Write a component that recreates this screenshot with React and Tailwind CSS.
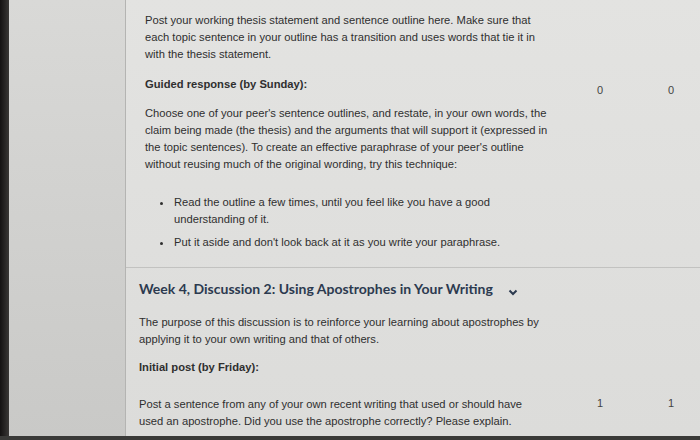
import React from 'react'

function Counts({ a, b, className }) {
    return (
        <div className={`flex shrink-0 text-[11px] text-[#444] ${className}`}>
            <div className="w-[84px] text-center">{a}</div>
            <div className="w-[58px] text-center">{b}</div>
        </div>
    )
}

export default function App() {
    return (
        <div className="w-[700px] h-[440px] flex flex-col overflow-hidden bg-[#2a2a2a] font-['Liberation_Sans',Arial,sans-serif]">
            <div className="flex flex-1 min-h-0">
                <div className="w-[9px] shrink-0 bg-gradient-to-r from-[#141212] to-[#3a3836]"></div>
                <div className="w-[117px] shrink-0 bg-gradient-to-b from-[#d9d9d7] to-[#c9c9c7] border-r border-[#b4b4b2]"></div>

                <div className="flex-1 min-w-0 flex flex-col bg-gradient-to-b from-[#e3e3e1] to-[#dcdcda] text-[#2f2f2f]">

                    {/* row 1 */}
                    <div className="flex h-[268px] border-b border-[#c2c2c0]">
                        <div className="w-[426px] shrink-0 pl-[19px] pt-[12px] text-[11.2px] leading-[17px]">
                            <p>Post your working thesis statement and sentence outline here. Make sure that each topic sentence in your outline has a transition and uses words that tie it in with the thesis statement.</p>
                            <p className="font-bold mt-[13px]">Guided response (by Sunday):</p>
                            <p className="mt-[12px]">Choose one of your peer's sentence outlines, and restate, in your own words, the claim being made (the thesis) and the arguments that will support it (expressed in the topic sentences). To create an effective paraphrase of your peer's outline without reusing much of the original wording, try this technique:</p>
                            <ul className="mt-[21px] pl-[28px] pr-[50px] list-disc">
                                <li className="pl-[1px]">Read the outline a few times, until you feel like you have a good understanding of it.</li>
                                <li className="pl-[1px] mt-[6px]">Put it aside and don't look back at it as you write your paraphrase.</li>
                            </ul>
                        </div>
                        <Counts a="0" b="0" className="ml-auto mt-[82px]" />
                    </div>

                    {/* row 2 */}
                    <div className="flex flex-1">
                        <div className="w-[417px] shrink-0 pl-[13px] pt-[11px] text-[11.2px] leading-[17px]">
                            <div className="flex items-center">
                                <h2 className="font-['Lato',sans-serif] font-bold text-[14px] text-[#2c3a4f] leading-[20px] whitespace-nowrap">Week 4, Discussion 2: Using Apostrophes in Your Writing</h2>
                                <svg className="ml-[15px] mt-[6px] shrink-0" width="10" height="7" viewBox="0 0 10 7">
                                    <path d="M1.5 1.5 L5 5 L8.5 1.5" fill="none" stroke="#2c3a4f" strokeWidth="2" />
                                </svg>
                            </div>
                            <p className="mt-[15px]">The purpose of this discussion is to reinforce your learning about apostrophes by applying it to your own writing and that of others.</p>
                            <p className="font-bold mt-[11px]">Initial post (by Friday):</p>
                            <p className="mt-[20px]">Post a sentence from any of your own recent writing that used or should have used an apostrophe. Did you use the apostrophe correctly? Please explain.</p>
                        </div>
                        <Counts a="1" b="1" className="ml-auto mt-[127px]" />
                    </div>
                </div>
            </div>
            <div className="h-[4px] bg-[#3a3a38]"></div>
        </div>
    )
}
